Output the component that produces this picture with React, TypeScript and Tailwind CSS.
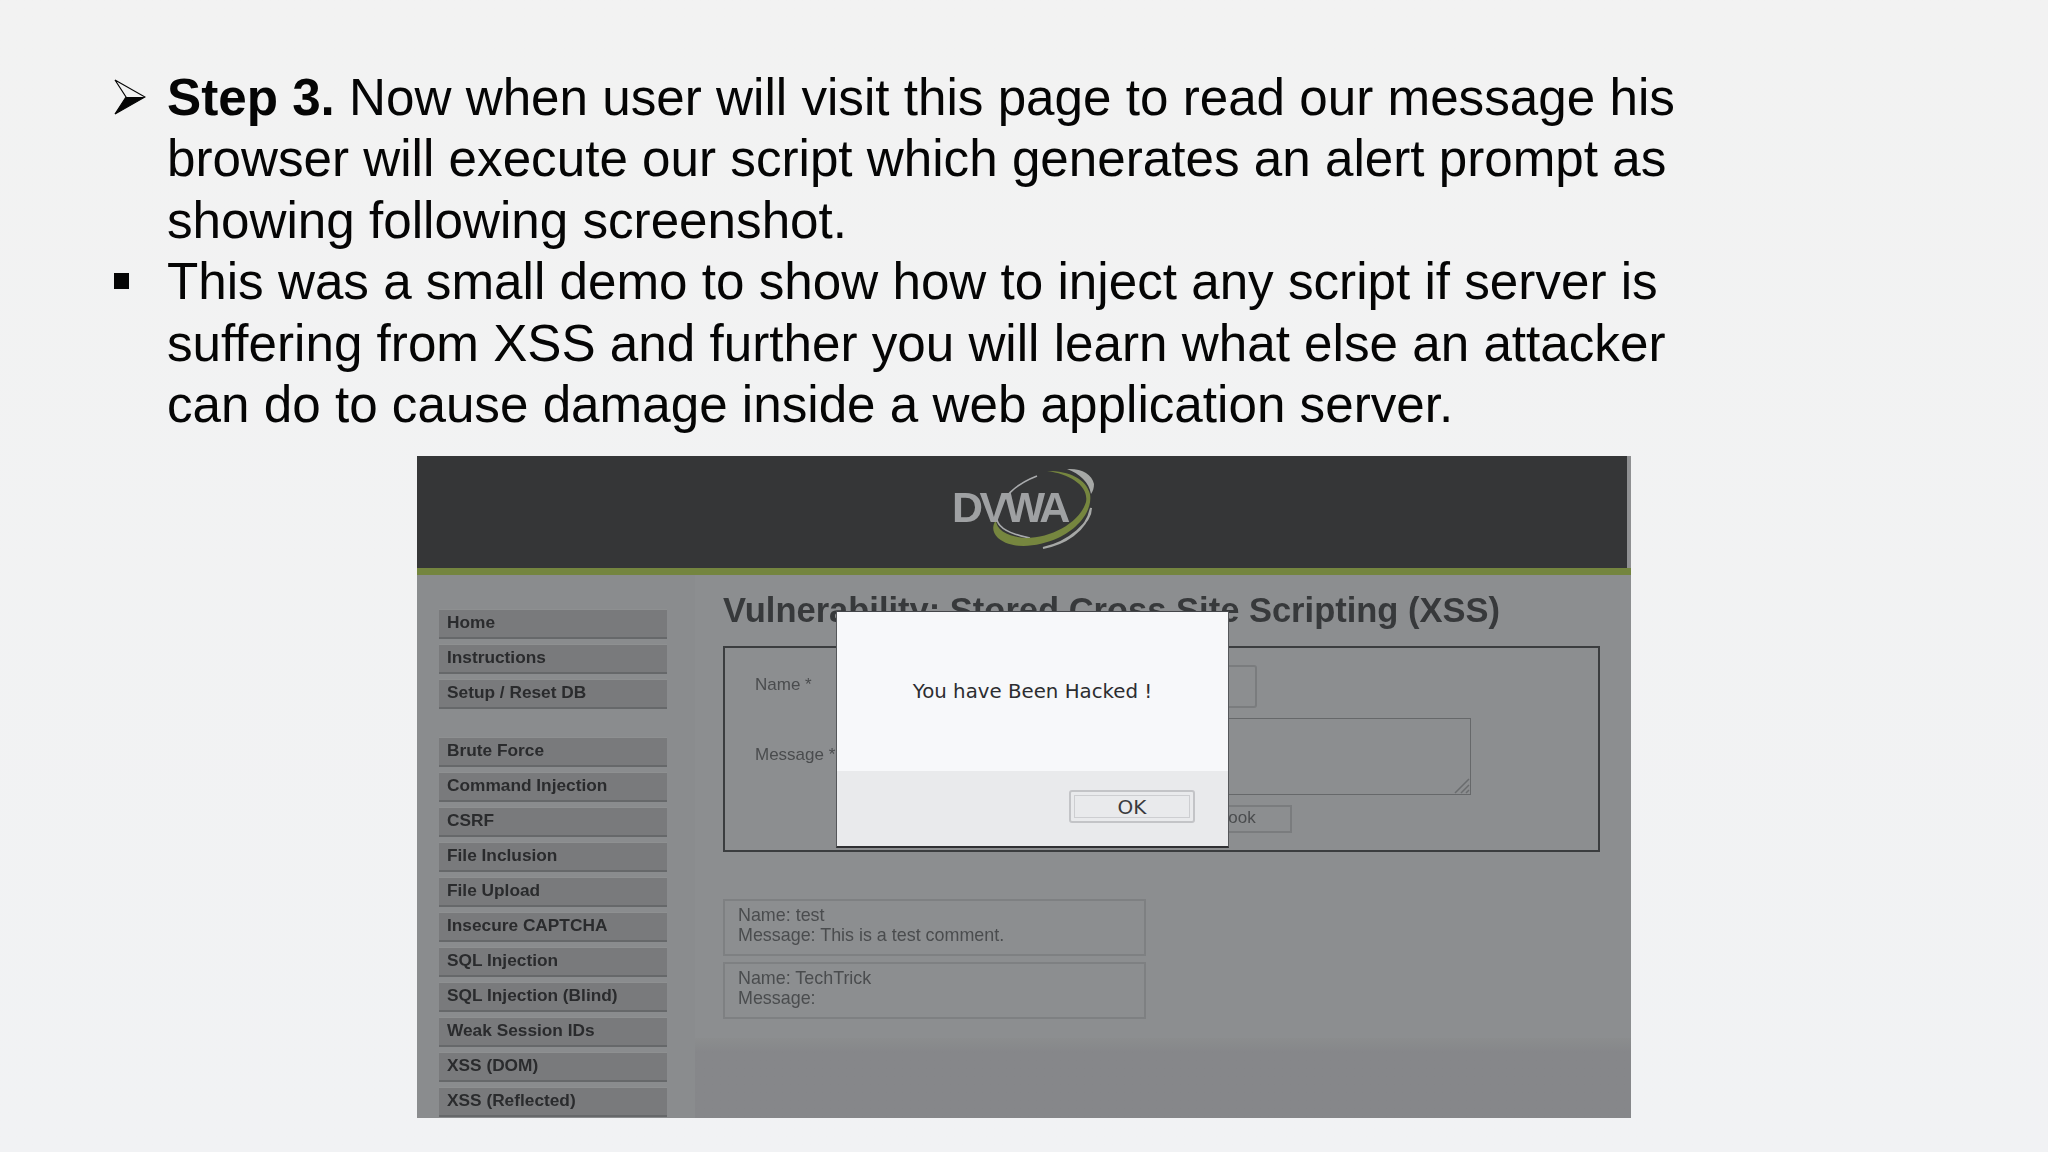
const topNav = ["Home", "Instructions", "Setup / Reset DB"];
const vulnNav = [
  "Brute Force",
  "Command Injection",
  "CSRF",
  "File Inclusion",
  "File Upload",
  "Insecure CAPTCHA",
  "SQL Injection",
  "SQL Injection (Blind)",
  "Weak Session IDs",
  "XSS (DOM)",
  "XSS (Reflected)",
];

function NavItem({ label }: { label: string }) {
  return (
    <div className="mb-[5px] h-[30px] shrink-0 border-t border-b-2 border-t-[#8e9091] border-b-[#66686a] bg-[#797a7c] pl-2 text-[17.3px] font-bold leading-[24px] text-[#2a2b2d]">
      {label}
    </div>
  );
}

function Logo() {
  return (
    <svg width="160" height="92" viewBox="0 0 160 92" className="mb-2">
      <path d="M94 14C73 22 57 36 54 55C53 66 67 72 87 76" fill="none" stroke="#a9abad" strokeWidth="1.6" />
      <path d="M104 9C127 9 143 17 147 32C150 50 133 68 115 76C95 85 69 88 55 76C49 70 49 64 53 58C53 68 65 75 83 76C109 76 137 60 143 40C146 24 127 12 104 9Z" fill="#76863f" />
      <path d="M124 7C138 6 149 12 151 22C151 26 150 29 148 32C146 20 137 12 124 7Z" fill="#a6a8a6" />
      <path d="M148 46C148 60 127 80 100 86C121 82 143 70 148 46Z" fill="#a6a8a6" stroke="#a6a8a6" strokeWidth="2" />
      <text x="9" y="60" fontSize="43" fontWeight="700" letterSpacing="-3.6" fill="#9fa1a3" fontFamily="Liberation Sans, sans-serif">
        DVWA
      </text>
    </svg>
  );
}

function DvwaShot() {
  return (
    <div className="relative ml-[417px] h-[662px] w-[1214px] overflow-hidden bg-[#8f9092]">
      <div className="flex h-full flex-col leading-normal blur-[0.7px]">
        <div className="flex h-[112px] w-[1210px] items-center justify-center bg-[#353637] pl-[2px]">
          <Logo />
        </div>
        <div className="h-[7px] bg-[#74853f]" />
        <div className="flex min-h-0 flex-1">
          <div className="flex w-[278px] shrink-0 flex-col bg-[#8a8c8e] pl-[22px] pr-[28px] pt-[34px]">
            {topNav.map((item) => (
              <NavItem key={item} label={item} />
            ))}
            <div className="h-[23px] shrink-0" />
            {vulnNav.map((item) => (
              <NavItem key={item} label={item} />
            ))}
          </div>
          <div className="flex flex-1 flex-col">
            <div className="h-[463px] bg-[#8c8e90] pl-[28px] pr-[31px] pt-[14px]">
              <h1 className="h-[42px] text-[34.5px] font-bold leading-[42px] text-[#37393b]">
                Vulnerability: Stored Cross Site Scripting (XSS)
              </h1>
              <div className="mt-[15px] h-[206px] border-2 border-[#3b3d3f] pl-[30px] pt-[17px] text-[17px] leading-[24px] text-[#4a4c4e]">
                <div className="flex h-[43px]">
                  <span className="w-[127px] pt-[8px]">Name *</span>
                  <div className="h-[43px] w-[375px] rounded-[3px] border-2 border-[#7a7c7e]" />
                </div>
                <div className="mt-[10px] flex h-[77px]">
                  <span className="w-[127px] pt-[25px]">Message *</span>
                  <div className="relative h-[77px] w-[589px] border border-[#66686a]">
                    <svg width="16" height="16" viewBox="0 0 16 16" className="absolute bottom-0 right-0">
                      <path d="M1 15L15 1M7 15L15 7M12 15L15 12" stroke="#6a6c6e" strokeWidth="1.5" />
                    </svg>
                  </div>
                </div>
                <div className="ml-[127px] mt-[10px] flex h-[28px] gap-[20px]">
                  <div className="w-[190px] border-2 border-[#7a7c7e] text-center leading-[22px]">Sign Guestbook</div>
                  <div className="w-[200px] border-2 border-[#7a7c7e] text-center leading-[22px]">Clear Guestbook</div>
                </div>
              </div>
              <div className="mt-[47px] h-[57px] w-[423px] border-2 border-[#7e8082] pl-[13px] pt-[4px] text-[17.9px] leading-[20px] text-[#4a4c4e]">
                <div>Name: test</div>
                <div>Message: This is a test comment.</div>
              </div>
              <div className="mt-[6px] h-[57px] w-[423px] border-2 border-[#7e8082] pl-[13px] pt-[4px] text-[17.9px] leading-[20px] text-[#4a4c4e]">
                <div>Name: TechTrick</div>
                <div>Message:</div>
              </div>
            </div>
            <div className="flex-1 bg-linear-to-b from-[#8b8d8e] to-[#86878a] to-[14px]" />
          </div>
        </div>
      </div>
      {/* alert box sits on top of the dimmed page */}
      <div className="absolute left-[419px] top-[155px] flex h-[237px] w-[393px] flex-col border-x border-t border-b-2 border-x-[#55575a] border-t-[#44464a] border-b-[#2f3033] leading-normal [font-family:'DejaVu_Sans',sans-serif]">
        <div className="flex h-[159px] items-center justify-center bg-[#f7f8fa] text-[19.8px] text-[#2c2d30]">
          You have Been Hacked !
        </div>
        <div className="flex flex-1 justify-end bg-[#e9eaec] pr-[33px] pt-[19px]">
          <div className="h-[33px] w-[126px] rounded-[3px] border-2 border-[#c3c4c7] p-[3px]">
            <div className="flex h-full items-center justify-center border border-[#cdced1] text-[20px] text-[#3a3b3e]">
              OK
            </div>
          </div>
        </div>
      </div>
    </div>
  );
}

export default function App() {
  return (
    <div className="h-[1152px] w-[2048px] overflow-hidden bg-linear-to-b from-[#f2f2f2] to-[#f1f2f4] pt-[67px] text-[51.2px] leading-[61.4px] text-[#050505] [font-family:'Liberation_Sans',sans-serif]">
      <div className="flex pl-[114px]">
        <div className="w-[53px] shrink-0 pt-[12px]">
          <svg width="32" height="36" viewBox="0 0 32 36" className="block">
            <path d="M1 1L31 18L1 35L12 18Z" fill="none" stroke="#050505" strokeWidth="1.2" />
            <path d="M12 18L31 18L1 35Z" fill="#050505" />
          </svg>
        </div>
        <p>
          <b>Step 3.</b> Now when user will visit this page to read our message his
          <br />
          browser will execute our script which generates an alert prompt as
          <br />
          showing following screenshot.
        </p>
      </div>
      <div className="flex pl-[114px]">
        <div className="w-[53px] shrink-0 pt-[22px]">
          <div className="h-[16px] w-[15px] bg-[#050505]" />
        </div>
        <p>
          This was a small demo to show how to inject any script if server is
          <br />
          suffering from XSS and further you will learn what else an attacker
          <br />
          can do to cause damage inside a web application server.
        </p>
      </div>
      <div className="mt-[21px]">
        <DvwaShot />
      </div>
    </div>
  );
}
